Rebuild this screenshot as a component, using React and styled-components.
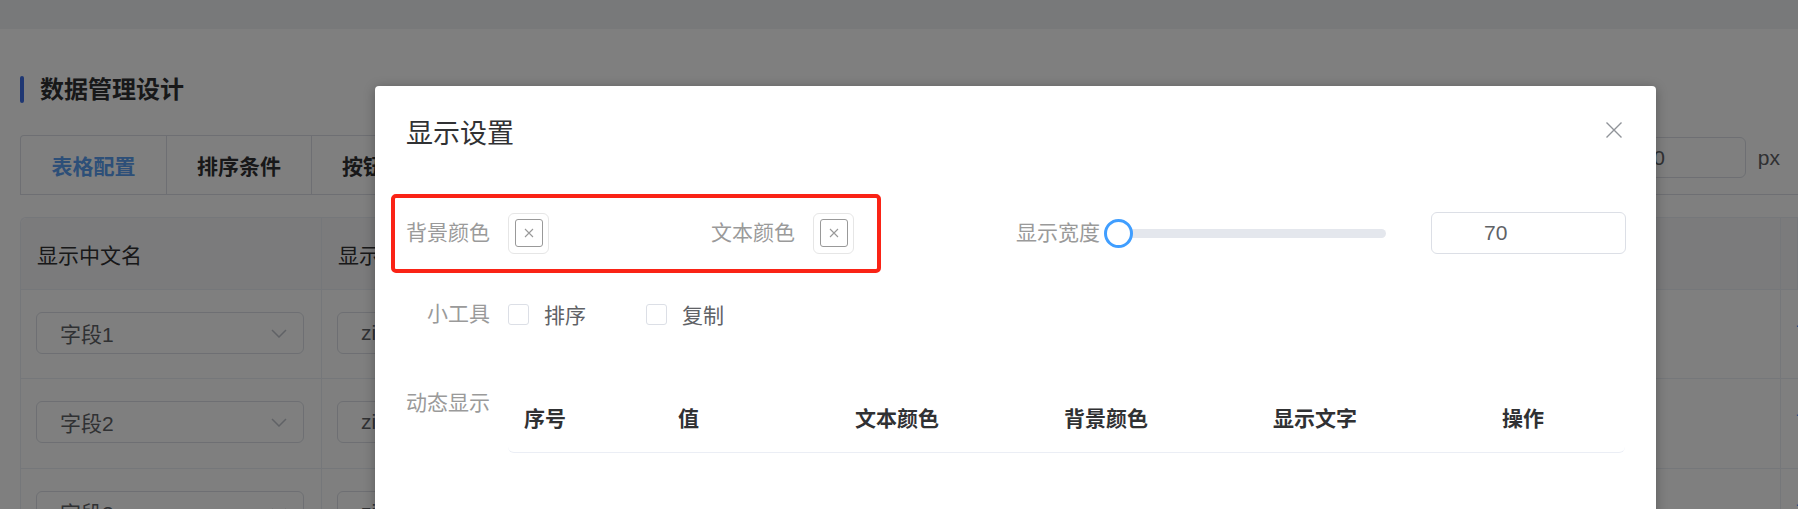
import React from "react";
import styled, { createGlobalStyle } from "styled-components";

const GlobalStyle = createGlobalStyle`
  html, body { margin: 0; padding: 0; }
  body {
    width: 1798px;
    height: 509px;
    overflow: hidden;
    background: #fff;
    font-family: "Liberation Sans", "Noto Sans CJK SC", sans-serif;
  }
  * { box-sizing: border-box; }
`;

const Page = styled.div`
  position: relative;
  width: 1798px;
  height: 509px;
  overflow: hidden;
  background: #fff;
`;

const TopBar = styled.div`
  height: 29px;
  background: #f1f2f5;
`;

const Main = styled.div`
  padding-left: 20px;
`;

const Heading = styled.div`
  display: flex;
  align-items: center;
  gap: 16px;
  height: 27px;
  margin-top: 47px;
`;

const AccentBar = styled.span`
  width: 4px;
  height: 27px;
  border-radius: 2px;
  background: #3f6ee6;
`;

const HeadingText = styled.h1`
  margin: 0;
  font-size: 24px;
  font-weight: 700;
  line-height: 27px;
  color: #303133;
`;

const TabBar = styled.div`
  display: flex;
  height: 60px;
  margin-top: 32px;
  border-bottom: 1px solid #dcdfe6;
`;

const TabList = styled.div`
  display: flex;
  border: 1px solid #dcdfe6;
  border-bottom: none;
  border-radius: 4px 4px 0 0;
`;

const Tab = styled.div`
  width: 145px;
  display: flex;
  align-items: center;
  justify-content: center;
  font-size: 21px;
  font-weight: 700;
  color: ${(p) => (p.$active ? "#5a9ef0" : "#303133")};
  border-left: ${(p) => (p.$first ? "none" : "1px solid #dcdfe6")};
`;

const TabExtra = styled.div`
  margin-left: auto;
  margin-right: 18px;
  padding-top: 2px;
  display: flex;
  align-items: flex-start;
  gap: 12px;
`;

const WidthInput = styled.div`
  width: 140px;
  height: 41px;
  padding-left: 23px;
  border: 1px solid #dcdfe6;
  border-radius: 6px;
  font-size: 21px;
  line-height: 39px;
  color: #606266;
`;

const Unit = styled.span`
  font-size: 21px;
  line-height: 41px;
  color: #606266;
`;

const BgTable = styled.div`
  margin-top: 22px;
  border-left: 1px solid #ebeef5;
  border-top: 1px solid #ebeef5;
  border-radius: 6px 0 0 0;
`;

const BgRow = styled.div`
  display: grid;
  grid-template-columns: 301px 1459px 1fr;
  height: ${(p) => p.$h}px;
  background: ${(p) => (p.$head ? "#f6f7f9" : "#fff")};
  border-bottom: 1px solid #ebeef5;
  border-radius: ${(p) => (p.$head ? "6px 0 0 0" : "0")};
`;

const BgHeadCell = styled.div`
  display: flex;
  align-items: center;
  padding-left: 16px;
  font-size: 21px;
  color: #303133;
  white-space: nowrap;
  overflow: hidden;
  border-right: 1px solid #ebeef5;
`;

const BgCell = styled.div`
  padding: 22px 16px 0 15px;
  border-right: 1px solid #ebeef5;
  white-space: nowrap;
  overflow: hidden;
  font-size: 21px;
  color: ${(p) => (p.$link ? "#409eff" : "#606266")};
`;

const SelectBox = styled.div`
  width: ${(p) => p.$w || "268px"};
  height: 42px;
  display: flex;
  align-items: center;
  justify-content: space-between;
  padding: 0 16px 0 23px;
  border: 1px solid #dcdfe6;
  border-radius: 6px;
  font-size: 21px;
  color: #606266;
  background: #fff;
`;

const Overlay = styled.div`
  position: absolute;
  inset: 0;
  background: rgba(0, 0, 0, 0.5);
`;

const Dialog = styled.div`
  position: absolute;
  left: 375px;
  top: 86px;
  width: 1281px;
  height: 460px;
  background: #fff;
  border-radius: 4px;
  box-shadow: 0 2px 12px rgba(0, 0, 0, 0.3);
`;

const DialogHeader = styled.div`
  padding: 30px 31px 0;
`;

const DialogTitle = styled.h2`
  margin: 0;
  font-size: 27px;
  font-weight: 400;
  line-height: 36px;
  color: #303133;
`;

const CloseButton = styled.button`
  position: absolute;
  top: 36px;
  right: 34px;
  width: 16px;
  height: 16px;
  padding: 0;
  border: none;
  background: none;
  display: flex;
`;

const DialogBody = styled.div`
  padding: 0 31px;
`;

const FormRow = styled.div`
  display: flex;
  align-items: ${(p) => (p.$top ? "flex-start" : "center")};
  min-height: 42px;
  margin-top: ${(p) => p.$mt}px;
`;

const FormItem = styled.div`
  display: flex;
  align-items: ${(p) => (p.$top ? "flex-start" : "center")};
  width: ${(p) => (p.$w ? `${p.$w}px` : "auto")};
  flex-shrink: 0;
`;

const Label = styled.label`
  width: 102px;
  flex-shrink: 0;
  padding-right: 18px;
  text-align: right;
  white-space: nowrap;
  font-size: 21px;
  line-height: 42px;
  color: #9a9a9a;
`;

const PickerOuter = styled.div`
  width: 41px;
  height: 41px;
  display: flex;
  align-items: center;
  justify-content: center;
  border: 1px solid #e6e6e6;
  border-radius: 6px;
`;

const PickerInner = styled.div`
  width: 28px;
  height: 28px;
  display: flex;
  align-items: center;
  justify-content: center;
  border: 1px solid #999;
  border-radius: 3px;
`;

const Annotation = styled.div`
  position: absolute;
  left: 16px;
  top: 108px;
  width: 490px;
  height: 79px;
  border: 4px solid #fa2316;
  border-radius: 5px;
  pointer-events: none;
`;

const Slider = styled.div`
  position: relative;
  width: 268px;
  height: 9px;
  border-radius: 5px;
  background: #e4e7ed;
  margin-right: 45px;
`;

const Thumb = styled.span`
  position: absolute;
  left: -14.5px;
  top: 50%;
  width: 29px;
  height: 29px;
  margin-top: -14.5px;
  border: 3px solid #409eff;
  border-radius: 50%;
  background: #fff;
`;

const NumberInput = styled.div`
  width: 195px;
  height: 42px;
  padding-left: 52px;
  border: 1px solid #dcdfe6;
  border-radius: 6px;
  font-size: 21px;
  line-height: 40px;
  color: #606266;
`;

const CheckOption = styled.div`
  display: flex;
  align-items: center;
  gap: 15px;
  margin-right: 60px;
  font-size: 21px;
  color: #606266;
`;

const CheckBox = styled.span`
  width: 21px;
  height: 21px;
  border: 1px solid #dcdfe6;
  border-radius: 3px;
  background: #fff;
`;

const DynTable = styled.div`
  width: 1117px;
  display: grid;
  grid-template-columns: 154px 177px 209px 209px 229px 139px;
  height: 71px;
  border-bottom: 1px solid #ebeef5;
  border-radius: 0 0 6px 6px;
`;

const DynHead = styled.div`
  display: flex;
  align-items: center;
  padding: 0 0 0 16px;
  font-size: 21px;
  font-weight: 700;
  color: #303133;
  white-space: nowrap;
`;

const Chevron = () => (
  <svg width="16" height="9" viewBox="0 0 16 9">
    <polyline points="1,1 8,8 15,1" fill="none" stroke="#c0c4cc" strokeWidth="1.5" />
  </svg>
);

const SmallX = () => (
  <svg width="10" height="10" viewBox="0 0 10 10">
    <path d="M1 1 L9 9 M9 1 L1 9" stroke="#999" strokeWidth="1.1" fill="none" />
  </svg>
);

const ColorPicker = () => (
  <PickerOuter>
    <PickerInner>
      <SmallX />
    </PickerInner>
  </PickerOuter>
);

const rows = [
  { name: "字段1", en: "ziduan1" },
  { name: "字段2", en: "ziduan2" },
  { name: "字段3", en: "ziduan3" },
];

export default function App() {
  return (
    <Page>
      <GlobalStyle />
      <TopBar />
      <Main>
        <Heading>
          <AccentBar />
          <HeadingText>数据管理设计</HeadingText>
        </Heading>
        <TabBar>
          <TabList>
            <Tab $first $active>表格配置</Tab>
            <Tab>排序条件</Tab>
            <Tab>按钮配置</Tab>
          </TabList>
          <TabExtra>
            <WidthInput>150</WidthInput>
            <Unit>px</Unit>
          </TabExtra>
        </TabBar>
        <BgTable>
          <BgRow $head $h={72}>
            <BgHeadCell>显示中文名</BgHeadCell>
            <BgHeadCell>显示英文名</BgHeadCell>
            <BgHeadCell>显</BgHeadCell>
          </BgRow>
          {rows.map((r, i) => (
            <BgRow key={r.name} $h={i === 0 ? 89 : 90}>
              <BgCell>
                <SelectBox>
                  {r.name}
                  <Chevron />
                </SelectBox>
              </BgCell>
              <BgCell>
                <SelectBox $w="600px">{r.en}</SelectBox>
              </BgCell>
              <BgCell $link>设</BgCell>
            </BgRow>
          ))}
        </BgTable>
      </Main>

      <Overlay />

      <Dialog>
        <DialogHeader>
          <DialogTitle>显示设置</DialogTitle>
        </DialogHeader>
        <CloseButton aria-label="关闭">
          <svg width="16" height="16" viewBox="0 0 16 16">
            <path d="M0.5 0.5 L15.5 15.5 M15.5 0.5 L0.5 15.5" stroke="#909399" strokeWidth="1.4" fill="none" />
          </svg>
        </CloseButton>
        <DialogBody>
          <FormRow $mt={60}>
            <FormItem $w={305}>
              <Label>背景颜色</Label>
              <ColorPicker />
            </FormItem>
            <FormItem $w={305}>
              <Label>文本颜色</Label>
              <ColorPicker />
            </FormItem>
            <FormItem>
              <Label>显示宽度</Label>
              <Slider>
                <Thumb />
              </Slider>
              <NumberInput>70</NumberInput>
            </FormItem>
          </FormRow>
          <FormRow $mt={39}>
            <FormItem>
              <Label>小工具</Label>
              <CheckOption>
                <CheckBox />
                排序
              </CheckOption>
              <CheckOption>
                <CheckBox />
                复制
              </CheckOption>
            </FormItem>
          </FormRow>
          <FormRow $mt={47} $top>
            <FormItem $top>
              <Label>动态显示</Label>
              <DynTable>
                <DynHead>序号</DynHead>
                <DynHead>值</DynHead>
                <DynHead>文本颜色</DynHead>
                <DynHead>背景颜色</DynHead>
                <DynHead>显示文字</DynHead>
                <DynHead>操作</DynHead>
              </DynTable>
            </FormItem>
          </FormRow>
        </DialogBody>
        <Annotation />
      </Dialog>
    </Page>
  );
}
